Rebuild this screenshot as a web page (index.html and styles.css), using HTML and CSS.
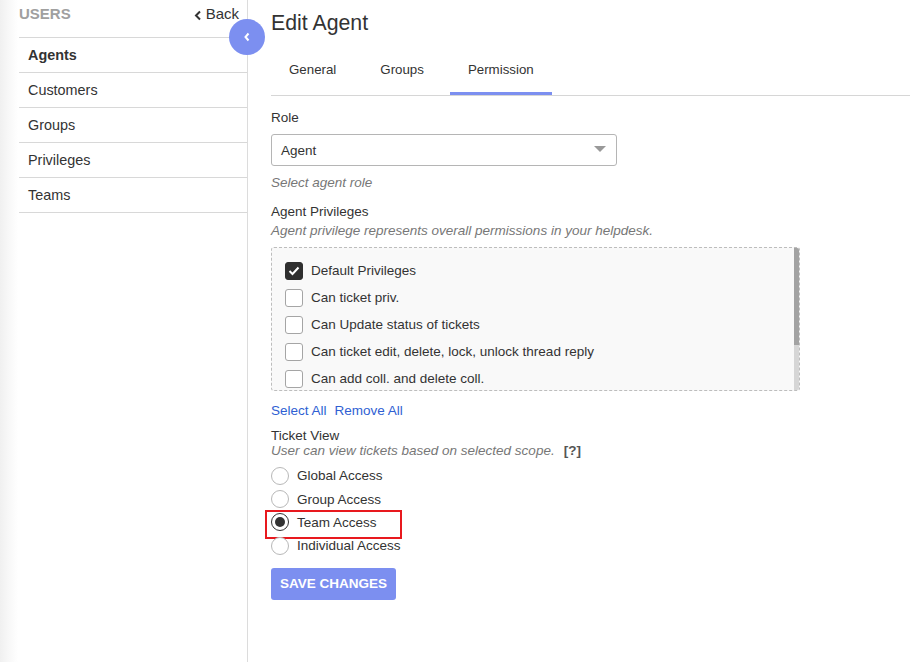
FILE: index.html
```html
<!DOCTYPE html>
<html>
<head>
<meta charset="utf-8">
<link rel="stylesheet" href="styles.css">
</head>
<body>
<div class="layout">
  <aside class="sidebar">
    <div class="side-head">
      <span class="side-title">USERS</span>
      <span class="back"><svg class="back-icon" width="8" height="11" viewBox="0 0 8 11"><path d="M6 1.5 L2 5.5 L6 9.5" fill="none" stroke="#333" stroke-width="2"/></svg>Back</span>
    </div>
    <ul class="side-list">
      <li class="side-item active">Agents</li>
      <li class="side-item">Customers</li>
      <li class="side-item">Groups</li>
      <li class="side-item">Privileges</li>
      <li class="side-item">Teams</li>
    </ul>
    <div class="toggle"><svg width="8" height="10" viewBox="0 0 8 10"><path d="M5.5 1.5 L2.5 5 L5.5 8.5" fill="none" stroke="#fff" stroke-width="2"/></svg></div>
  </aside>
  <main class="main">
    <h1 class="title">Edit Agent</h1>
    <div class="tabs">
      <span class="tab">General</span>
      <span class="tab">Groups</span>
      <span class="tab active">Permission</span>
    </div>
    <div class="form">
      <label class="label role-label">Role</label>
      <div class="select"><span>Agent</span><span class="caret"></span></div>
      <div class="hint">Select agent role</div>
      <div class="label priv-label">Agent Privileges</div>
      <div class="hint">Agent privilege represents overall permissions in your helpdesk.</div>
      <div class="priv-box">
        <div class="priv-list">
          <div class="check-row"><span class="check checked"><svg width="12" height="10" viewBox="0 0 12 10"><path d="M1.5 5 L4.5 8 L10.5 1.5" fill="none" stroke="#fff" stroke-width="2"/></svg></span>Default Privileges</div>
          <div class="check-row"><span class="check"></span>Can ticket priv.</div>
          <div class="check-row"><span class="check"></span>Can Update status of tickets</div>
          <div class="check-row"><span class="check"></span>Can ticket edit, delete, lock, unlock thread reply</div>
          <div class="check-row"><span class="check"></span>Can add coll. and delete coll.</div>
        </div>
        <div class="scrollbar"><div class="thumb"></div></div>
      </div>
      <div class="links"><a class="link">Select All</a><a class="link">Remove All</a></div>
      <div class="label view-label">Ticket View</div>
      <div class="hint view-hint">User can view tickets based on selected scope.<b class="help">[?]</b></div>
      <div class="radios">
        <div class="radio-row"><span class="radio"></span>Global Access</div>
        <div class="radio-row"><span class="radio"></span>Group Access</div>
        <div class="radio-row highlighted"><span class="radio on"></span>Team Access</div>
        <div class="radio-row"><span class="radio"></span>Individual Access</div>
      </div>
      <button class="save">SAVE CHANGES</button>
    </div>
  </main>
</div>
</body>
</html>
```
FILE: styles.css
```css
* { box-sizing: border-box; }
html, body { margin: 0; padding: 0; }
body {
  font-family: "Liberation Sans", Arial, sans-serif;
  font-size: 13.5px;
  color: #333;
  background: #fff;
}
.layout {
  display: flex;
  height: 662px;
  overflow: hidden;
}
.sidebar {
  position: relative;
  width: 248px;
  flex: none;
  padding-left: 19px;
  border-right: 1px solid #dcdcdc;
  background: linear-gradient(to right, #f0f0f0 0, #f8f8f8 9px, #fff 18px);
}
.side-head {
  display: flex;
  justify-content: space-between;
  align-items: flex-start;
  height: 38px;
  border-bottom: 1px solid #d8d8d8;
  padding-top: 5px;
  padding-right: 8px;
  background: #fff;
}
.side-title {
  font-weight: bold;
  font-size: 15px;
  color: #a0a0a0;
  line-height: 18px;
}
.back {
  display: flex;
  align-items: center;
  font-size: 15px;
  line-height: 18px;
  color: #333;
}
.back-icon { margin-right: 4px; margin-top: 2px; }
.side-list {
  list-style: none;
  margin: 0;
  padding: 0;
  background: #fff;
}
.side-item {
  height: 35px;
  line-height: 34px;
  padding-left: 9px;
  border-bottom: 1px solid #d8d8d8;
  font-size: 14.4px;
}
.side-item.active { font-weight: bold; }
.toggle {
  position: absolute;
  left: 229px;
  top: 19px;
  width: 36px;
  height: 36px;
  border-radius: 50%;
  background: #7c8ff0;
  display: flex;
  align-items: center;
  justify-content: center;
  z-index: 2;
}
.main {
  flex: 1;
  padding-left: 23px;
}
.title {
  margin: 9px 0 0;
  font-size: 21.3px;
  font-weight: normal;
  line-height: 28px;
  color: #333;
}
.tabs {
  display: flex;
  gap: 8px;
  margin-top: 8px;
  border-bottom: 1px solid #d6d6d6;
}
.tab {
  padding: 2px 18px 0;
  line-height: 45px;
  border-bottom: 3px solid transparent;
  color: #333;
  font-size: 13.3px;
}
.tab.active { border-bottom-color: #7c8ff0; }
.form {
  display: flex;
  flex-direction: column;
  align-items: flex-start;
}
.label { line-height: 17px; color: #333; }
.role-label { margin-top: 13px; }
.select {
  margin-top: 8px;
  width: 346px;
  height: 32px;
  border: 1px solid #b5b5b5;
  border-radius: 3px;
  display: flex;
  align-items: center;
  justify-content: space-between;
  padding: 0 10px 0 9px;
  background: #fff;
}
.caret {
  width: 0;
  height: 0;
  border-left: 6px solid transparent;
  border-right: 6px solid transparent;
  border-top: 6px solid #999;
  margin-top: -2px;
}
.hint {
  font-style: italic;
  color: #777;
  line-height: 18px;
}
.select + .hint { margin-top: 8px; }
.priv-label { margin-top: 11px; }
.priv-label + .hint { margin-top: 2px; }
.priv-box {
  margin-top: 7px;
  width: 529px;
  height: 144px;
  border: 1px dashed #bdbdbd;
  border-radius: 3px;
  background: #f9f9f9;
  display: flex;
  overflow: hidden;
}
.priv-list {
  flex: 1;
  padding: 9px 0 0 13px;
}
.check-row {
  display: flex;
  align-items: center;
  height: 27px;
  gap: 8px;
}
.check {
  width: 18px;
  height: 18px;
  border: 1px solid #a5a5a5;
  border-radius: 3px;
  background: #fff;
  display: flex;
  align-items: center;
  justify-content: center;
  flex: none;
}
.check.checked { background: #2f2f2f; border-color: #2f2f2f; }
.scrollbar {
  width: 5px;
  background: #d6d6d6;
  display: flex;
  flex-direction: column;
}
.thumb { height: 97px; background: #a3a3a3; }
.links {
  display: flex;
  gap: 8px;
  margin-top: 11px;
  line-height: 18px;
}
.link { color: #2f5fd3; text-decoration: none; }
.view-label { margin-top: 7px; line-height: 17px; }
.view-hint { margin-top: -2px; line-height: 17px; }
.help {
  font-style: normal;
  font-weight: bold;
  color: #555;
  margin-left: 9px;
}
.radios { margin-top: 5px; }
.radio-row {
  display: flex;
  align-items: center;
  gap: 8px;
  height: 23.4px;
  position: relative;
}
.radio {
  width: 18px;
  height: 18px;
  border: 1px solid #b8b8b8;
  border-radius: 50%;
  background: #fff;
  display: flex;
  align-items: center;
  justify-content: center;
  flex: none;
}
.radio.on { border-color: #333; }
.radio.on::after {
  content: "";
  width: 10px;
  height: 10px;
  border-radius: 50%;
  background: #333;
}
.highlighted::after {
  content: "";
  position: absolute;
  left: -6px;
  top: -1px;
  width: 133px;
  height: 25px;
  border: 2px solid #e8191e;
}
.save {
  margin-top: 10px;
  height: 32px;
  width: 125px;
  border: none;
  border-radius: 3px;
  background: #7c8ff0;
  color: #fff;
  font-family: "Liberation Sans", Arial, sans-serif;
  font-weight: bold;
  font-size: 13.5px;
  padding: 0;
}
```
